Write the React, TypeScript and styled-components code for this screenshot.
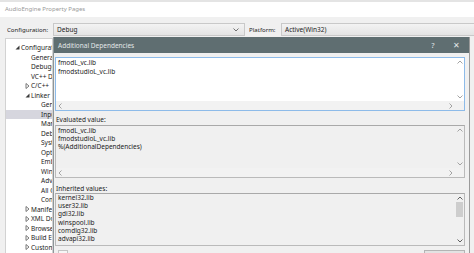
import React from 'react';
import styled, { createGlobalStyle } from 'styled-components';

const GlobalStyle = createGlobalStyle`
  html, body { margin: 0; padding: 0; background: #f0f0f0; }
  body { font-family: "Noto Sans", "Open Sans", sans-serif; }
  #root { width: 474px; height: 253px; overflow: hidden; }
`;

const Window = styled.div`
  position: relative;
  width: 474px;
  height: 253px;
  overflow: hidden;
  background: #f0f0f0;
  display: flex;
  flex-direction: column;
  font-size: 6.5px;
  color: #1c1c1c;
`;

const TitleBar = styled.div`
  height: 15px;
  flex: none;
  border-top: 2px solid #e4e4e4;
  background: #ffffff;
  padding-left: 5px;
  line-height: 15px;
  font-size: 6px;
  color: #9a9a9a;
`;

const ConfigRow = styled.div`
  height: 21px;
  flex: none;
  box-sizing: border-box;
  padding: 6px 0 0 7px;
  display: flex;
  align-items: flex-start;
`;

const FieldLabel = styled.div<{ $w: number; $ml?: number }>`
  width: ${(p) => p.$w}px;
  margin-left: ${(p) => p.$ml ?? 0}px;
  line-height: 13px;
  font-size: 6.1px;
  flex: none;
  white-space: nowrap;
  overflow: hidden;
`;

const Combo = styled.div<{ $w: number }>`
  width: ${(p) => p.$w}px;
  height: 13px;
  box-sizing: border-box;
  flex: none;
  border: 1px solid #c9c9c9;
  background: linear-gradient(#f3f3f3, #e4e4e4);
  padding: 0 5px 0 3px;
  line-height: 11px;
  display: flex;
  justify-content: space-between;
  align-items: center;
`;

const Main = styled.div`
  flex: 1;
  display: flex;
  min-height: 0;
`;

const Tree = styled.div`
  margin-left: 5px;
  width: 48px;
  overflow: hidden;
  background: #ffffff;
  border: 1px solid #d2d2d2;
  border-bottom: none;
  padding-top: 4px;
  box-sizing: border-box;
`;

const TreeRow = styled.div<{ $level: number; $selected?: boolean }>`
  height: 9.5px;
  line-height: 9.5px;
  display: flex;
  align-items: center;
  white-space: nowrap;
  padding-left: ${(p) => 9 + p.$level * 10}px;
  background: ${(p) => (p.$selected ? '#d6d6de' : 'transparent')};
`;

const Twisty = styled.span`
  width: 6px;
  flex: none;
  display: flex;
  align-items: center;
`;

const Dialog = styled.div`
  position: absolute;
  left: 53px;
  top: 37px;
  width: 417px;
  height: 240px;
  box-sizing: border-box;
  border-left: 1px solid #8e9699;
  border-right: 1px solid #9a9a9a;
  background: #f0f0f0;
  display: flex;
  flex-direction: column;
`;

const DialogHeader = styled.div`
  height: 16px;
  flex: none;
  background: #5f6e71;
  color: #e2e7e8;
  display: flex;
  align-items: center;
  padding-left: 4px;
`;

const HeaderTitle = styled.span`
  flex: 1;
`;

const HeaderButton = styled.span<{ $w: number }>`
  width: ${(p) => p.$w}px;
  text-align: center;
  font-size: 7.5px;
`;

const DialogBody = styled.div`
  padding: 4px 4px 0 1px;
  display: flex;
  flex-direction: column;
`;

const Box = styled.div<{ $h: number; $focus?: boolean; $hscroll?: boolean }>`
  height: ${(p) => p.$h}px;
  box-sizing: border-box;
  border: 1px solid ${(p) => (p.$focus ? '#8dbbe9' : '#bababa')};
  border-top-color: ${(p) => (p.$focus ? '#8dbbe9' : '#a9a9a9')};
  background: ${(p) => (p.$focus ? '#ffffff' : '#f0f0f0')};
  display: grid;
  grid-template-columns: 1fr 9px;
  grid-template-rows: ${(p) => (p.$hscroll ? 'minmax(0, 1fr) 9px' : 'minmax(0, 1fr)')};
  overflow: hidden;
`;

const BoxText = styled.div<{ $lh: number; $pt: number }>`
  padding: ${(p) => p.$pt}px 0 0 2px;
  line-height: ${(p) => p.$lh}px;
  overflow: hidden;
  min-height: 0;
  white-space: nowrap;
`;

const VScroll = styled.div`
  display: flex;
  flex-direction: column;
  justify-content: space-between;
  align-items: center;
  min-height: 0;
`;

const Arrow = styled.div`
  height: 9px;
  width: 9px;
  display: flex;
  align-items: center;
  justify-content: center;
  flex: none;
`;

const Thumb = styled.div`
  width: 7px;
  height: 15px;
  background: #cdcdcd;
  margin-bottom: auto;
  margin-top: -1px;
`;

const HScroll = styled.div`
  background: #f2f2f2;
  display: flex;
  justify-content: space-between;
  align-items: center;
`;

const Corner = styled.div`
  background: #f2f2f2;
`;

const SectionLabel = styled.div<{ $h: number; $pt: number }>`
  height: ${(p) => p.$h}px;
  box-sizing: border-box;
  padding: ${(p) => p.$pt}px 0 0 1px;
  line-height: 9px;
`;

const Footer = styled.div`
  display: flex;
  justify-content: space-between;
  align-items: flex-start;
  padding-top: 4px;
`;

const CheckBox = styled.div`
  margin-left: 3px;
  width: 8px;
  height: 8px;
  border: 1px solid #c4c4c4;
  background: #f6f6f6;
`;

const Button = styled.div`
  width: 41px;
  height: 14px;
  box-sizing: border-box;
  border: 1px solid #b4b4b4;
  background: #e3e3e3;
`;

const Chevron = ({ dir, color = '#a3a3a3' }: { dir: 'up' | 'down' | 'left' | 'right'; color?: string }) => {
  const d = {
    up: 'M0.5 3.5 L3 1 L5.5 3.5',
    down: 'M0.5 1.5 L3 4 L5.5 1.5',
    left: 'M3.5 0.5 L1 3 L3.5 5.5',
    right: 'M1.5 0.5 L4 3 L1.5 5.5',
  }[dir];
  return (
    <svg width="6" height="6" viewBox="0 0 6 6">
      <path d={d} fill="none" stroke={color} strokeWidth="1" />
    </svg>
  );
};

const Expanded = () => (
  <svg width="5" height="5" viewBox="0 0 5 5">
    <path d="M4.5 0.5 L4.5 4.5 L0.5 4.5 Z" fill="#3a3a3a" />
  </svg>
);

const Collapsed = () => (
  <svg width="5" height="6" viewBox="0 0 5 6">
    <path d="M1 0.5 L4 3 L1 5.5 Z" fill="none" stroke="#6a6a6a" strokeWidth="0.9" />
  </svg>
);

type Node = { label: string; level: number; twisty?: 'open' | 'closed'; selected?: boolean };

const treeItems: Node[] = [
  { label: 'Configuration Properties', level: 0, twisty: 'open' },
  { label: 'General', level: 1 },
  { label: 'Debugging', level: 1 },
  { label: 'VC++ Directories', level: 1 },
  { label: 'C/C++', level: 1, twisty: 'closed' },
  { label: 'Linker', level: 1, twisty: 'open' },
  { label: 'General', level: 2 },
  { label: 'Input', level: 2, selected: true },
  { label: 'Manifest File', level: 2 },
  { label: 'Debugging', level: 2 },
  { label: 'System', level: 2 },
  { label: 'Optimization', level: 2 },
  { label: 'Embedded IDL', level: 2 },
  { label: 'Windows Metadata', level: 2 },
  { label: 'Advanced', level: 2 },
  { label: 'All Options', level: 2 },
  { label: 'Command Line', level: 2 },
  { label: 'Manifest Tool', level: 1, twisty: 'closed' },
  { label: 'XML Document Generator', level: 1, twisty: 'closed' },
  { label: 'Browse Information', level: 1, twisty: 'closed' },
  { label: 'Build Events', level: 1, twisty: 'closed' },
  { label: 'Custom Build Step', level: 1, twisty: 'closed' },
];

const editLines = ['fmodL_vc.lib', 'fmodstudioL_vc.lib'];
const evalLines = ['fmodL_vc.lib', 'fmodstudioL_vc.lib', '%(AdditionalDependencies)'];
const inheritedLines = ['kernel32.lib', 'user32.lib', 'gdi32.lib', 'winspool.lib', 'comdlg32.lib', 'advapi32.lib'];

const Lines = ({ items }: { items: string[] }) => (
  <>
    {items.map((l, i) => (
      <div key={i}>{l}</div>
    ))}
  </>
);

export default function App() {
  return (
    <>
      <GlobalStyle />
      <Window>
        <TitleBar>AudioEngine Property Pages</TitleBar>
        <ConfigRow>
          <FieldLabel $w={46}>Configuration:</FieldLabel>
          <Combo $w={192}>
            <span>Debug</span>
            <Chevron dir="down" color="#707070" />
          </Combo>
          <FieldLabel $w={32} $ml={4}>Platform:</FieldLabel>
          <Combo $w={200}>
            <span>Active(Win32)</span>
          </Combo>
        </ConfigRow>
        <Main>
          <Tree>
            {treeItems.map((n, i) => (
              <TreeRow key={i} $level={n.level} $selected={n.selected}>
                <Twisty>{n.twisty === 'open' ? <Expanded /> : n.twisty === 'closed' ? <Collapsed /> : null}</Twisty>
                <span>{n.label}</span>
              </TreeRow>
            ))}
          </Tree>
        </Main>
        <Dialog>
          <DialogHeader>
            <HeaderTitle>Additional Dependencies</HeaderTitle>
            <HeaderButton $w={22}>?</HeaderButton>
            <HeaderButton $w={25}>✕</HeaderButton>
          </DialogHeader>
          <DialogBody>
            <Box $h={54} $focus $hscroll>
              <BoxText $lh={9} $pt={0}>
                <Lines items={editLines} />
              </BoxText>
              <VScroll>
                <Arrow><Chevron dir="up" /></Arrow>
                <Arrow><Chevron dir="down" /></Arrow>
              </VScroll>
              <HScroll>
                <Arrow><Chevron dir="left" /></Arrow>
                <Arrow><Chevron dir="right" /></Arrow>
              </HScroll>
              <Corner />
            </Box>
            <SectionLabel $h={14} $pt={3.5}>Evaluated value:</SectionLabel>
            <Box $h={53} $hscroll>
              <BoxText $lh={8} $pt={1}>
                <Lines items={evalLines} />
              </BoxText>
              <VScroll>
                <Arrow><Chevron dir="up" /></Arrow>
                <Arrow><Chevron dir="down" /></Arrow>
              </VScroll>
              <HScroll>
                <Arrow><Chevron dir="left" /></Arrow>
                <Arrow><Chevron dir="right" /></Arrow>
              </HScroll>
              <Corner />
            </Box>
            <SectionLabel $h={15} $pt={5.5}>Inherited values:</SectionLabel>
            <Box $h={53}>
              <BoxText $lh={8.2} $pt={0}>
                <Lines items={inheritedLines} />
              </BoxText>
              <VScroll>
                <Arrow><Chevron dir="up" color="#606060" /></Arrow>
                <Thumb />
                <Arrow><Chevron dir="down" color="#606060" /></Arrow>
              </VScroll>
            </Box>
            <Footer>
              <CheckBox />
              <Button />
            </Footer>
          </DialogBody>
        </Dialog>
      </Window>
    </>
  );
}
